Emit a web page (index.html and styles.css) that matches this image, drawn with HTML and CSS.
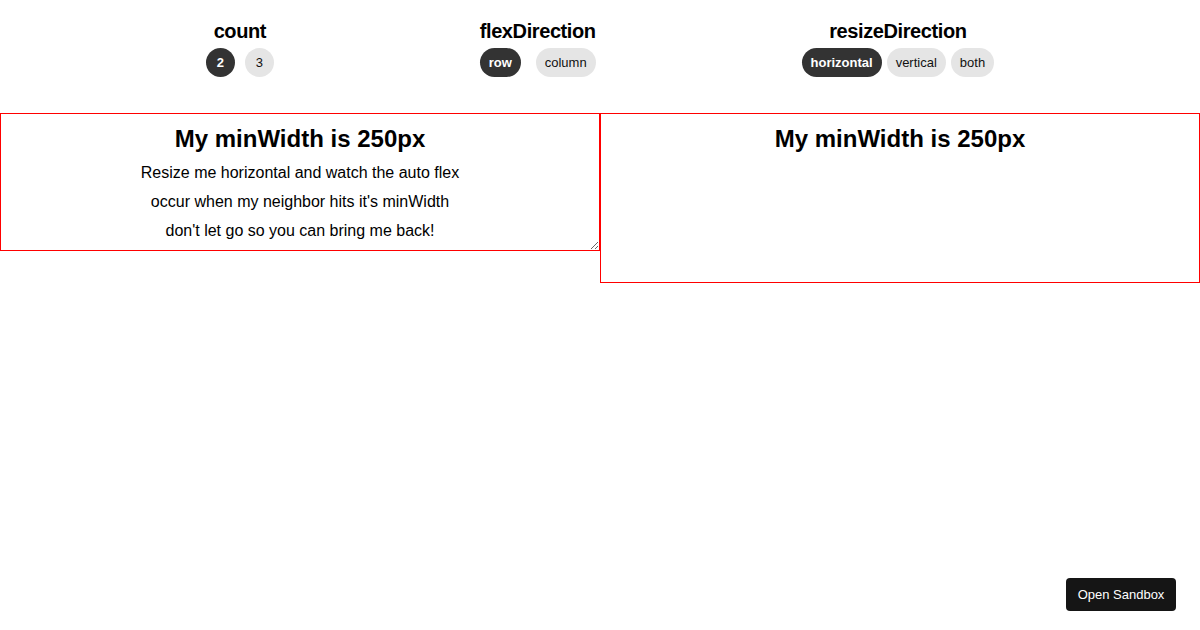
FILE: index.html
```html
<!DOCTYPE html>
<html>
<head>
<meta charset="utf-8">
<link rel="stylesheet" href="styles.css">
</head>
<body>
<div class="controls">
  <div class="group group-count">
    <div class="group-title">count</div>
    <div class="options">
      <button class="opt active">2</button>
      <button class="opt">3</button>
    </div>
  </div>
  <div class="group group-flex">
    <div class="group-title">flexDirection</div>
    <div class="options">
      <button class="opt active">row</button>
      <button class="opt">column</button>
    </div>
  </div>
  <div class="group">
    <div class="group-title">resizeDirection</div>
    <div class="options">
      <button class="opt active">horizontal</button>
      <button class="opt">vertical</button>
      <button class="opt">both</button>
    </div>
  </div>
</div>
<div class="panels">
  <div class="panel panel-resizable">
    <h2 class="panel-title">My minWidth is 250px</h2>
    <p class="panel-line">Resize me horizontal and watch the auto flex</p>
    <p class="panel-line">occur when my neighbor hits it's minWidth</p>
    <p class="panel-line">don't let go so you can bring me back!</p>
  </div>
  <div class="panel panel-static">
    <h2 class="panel-title">My minWidth is 250px</h2>
  </div>
</div>
<button class="sandbox">Open Sandbox</button>
</body>
</html>
```
FILE: styles.css
```css
html, body {
  margin: 0;
  padding: 0;
  background: #fff;
  font-family: "Liberation Sans", Arial, sans-serif;
  color: #000;
}
.controls {
  display: flex;
  justify-content: space-evenly;
  padding-top: 20px;
  height: 113px;
  box-sizing: border-box;
}
.group {
  display: flex;
  flex-direction: column;
  align-items: center;
}
.group-title {
  font-size: 20px;
  font-weight: bold;
  line-height: 23px;
  letter-spacing: -0.4px;
}
.options {
  display: flex;
  gap: 5px;
  margin-top: 5px;
  align-self: stretch;
  justify-content: space-between;
}
.group-count .options {
  gap: 10px;
}
.opt {
  font-family: "Liberation Sans", Arial, sans-serif;
  font-size: 13px;
  height: 29px;
  min-width: 29px;
  padding: 0 9px;
  border: none;
  border-radius: 15px;
  background: #e5e5e5;
  color: #111;
  cursor: pointer;
}
.opt.active {
  background: #333;
  color: #fff;
  font-weight: bold;
}
.panels {
  display: flex;
  align-items: flex-start;
}
.panel {
  flex: 1 1 0;
  min-width: 250px;
  border: 1px solid #ff0000;
  text-align: center;
}
.panel-resizable {
  resize: horizontal;
  overflow: auto;
  padding-bottom: 5px;
}
.panel-static {
  height: 168px;
}
.panel-title {
  font-size: 24px;
  font-weight: bold;
  line-height: 28px;
  margin: 11px 0 5px;
}
.panel-line {
  font-size: 16px;
  line-height: 29px;
  margin: 0;
}
.sandbox {
  position: fixed;
  right: 24px;
  bottom: 19px;
  width: 110px;
  height: 33px;
  border: none;
  border-radius: 4px;
  background: #151515;
  color: #fff;
  font-family: "Liberation Sans", Arial, sans-serif;
  font-size: 13px;
  padding: 0;
}
```
